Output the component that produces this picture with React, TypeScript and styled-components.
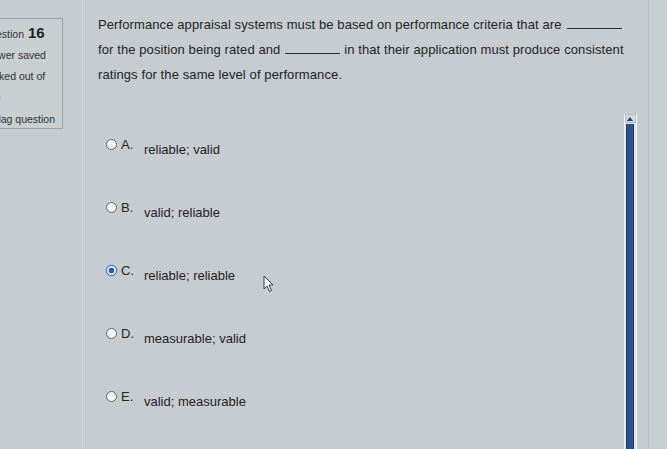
import React from "react";
import styled, { createGlobalStyle } from "styled-components";

const GlobalStyle = createGlobalStyle`
  html, body {
    margin: 0;
    padding: 0;
    background: #c6cccf;
    overflow: hidden;
  }
`;

interface Choice {
  letter: string;
  text: string;
  checked?: boolean;
}

const choices: Choice[] = [
  { letter: "A.", text: "reliable; valid" },
  { letter: "B.", text: "valid; reliable" },
  { letter: "C.", text: "reliable; reliable", checked: true },
  { letter: "D.", text: "measurable; valid" },
  { letter: "E.", text: "valid; measurable" },
];

function App() {
  return (
    <>
      <GlobalStyle />
      <Page>
        <SideColumn>
          <InfoBox>
            <QuestionNo>
              Question <b>16</b>
            </QuestionNo>
            <InfoLine>Answer saved</InfoLine>
            <InfoLine>Marked out of</InfoLine>
            <InfoLine>1.00</InfoLine>
            <FlagLine>Flag question</FlagLine>
          </InfoBox>
        </SideColumn>

        <Main>
          <Content>
            <QuestionText>
              Performance appraisal systems must be based on performance criteria that are
              <Blank />
              <br />
              for the position being rated and<Blank /> in that their application must produce consistent
              <br />
              ratings for the same level of performance.
            </QuestionText>

            <Answers>
              {choices.map((c) => (
                <AnswerRow key={c.letter}>
                  <Radio checked={!!c.checked} />
                  <Letter>{c.letter}</Letter>
                  <AnswerText>{c.text}</AnswerText>
                </AnswerRow>
              ))}
            </Answers>
          </Content>

          <ScrollTrack>
            <ScrollArrow>
              <svg width="6" height="4" viewBox="0 0 6 4">
                <path d="M0 4 L3 0 L6 4 Z" fill="#2d3f5c" />
              </svg>
            </ScrollArrow>
            <ScrollThumb />
          </ScrollTrack>
        </Main>

        <EdgeColumn />

        <Cursor width="12" height="18" viewBox="0 0 12 18">
          <path
            d="M1 1 L1 14 L4 11 L6.5 16.5 L8.5 15.5 L6 10 L10 10 Z"
            fill="#f4f6f7"
            stroke="#3a3f44"
            strokeWidth="1"
            strokeLinejoin="round"
          />
        </Cursor>
      </Page>
    </>
  );
}

const Page = styled.div`
  position: relative;
  display: flex;
  flex-direction: row;
  width: 667px;
  height: 449px;
  background: #c6cccf;
  font-family: "Liberation Sans", Arial, sans-serif;
  color: #1f2224;
  overflow: hidden;
`;

const SideColumn = styled.div`
  width: 83px;
  flex-shrink: 0;
  border-right: 1px solid #d3d8da;
  box-sizing: border-box;
  overflow: hidden;
`;

const InfoBox = styled.div`
  margin-top: 18px;
  margin-left: -28px;
  width: 91px;
  height: 111px;
  box-sizing: border-box;
  border: 1px solid #9ea5a8;
  background: #c9cfd1;
  padding: 6px 0 0 7px;
  font-size: 10.5px;
  color: #2f3335;
`;

const QuestionNo = styled.div`
  line-height: 16px;
  margin-bottom: 7px;
  margin-left: 2px;
  white-space: nowrap;

  b {
    font-size: 15px;
    font-weight: 700;
    color: #1c1f21;
    margin-left: 1px;
  }
`;

const InfoLine = styled.div`
  line-height: 12px;
  margin-bottom: 9px;
  white-space: nowrap;

  &:nth-of-type(3) {
    margin-bottom: 10px;
    margin-left: 1px;
  }
`;

const FlagLine = styled.div`
  line-height: 12px;
  margin-left: 12px;
  white-space: nowrap;
`;

const Main = styled.div`
  flex: 1;
  display: flex;
  flex-direction: row;
`;

const Content = styled.div`
  flex: 1;
  padding: 12px 0 0 15px;
`;

const QuestionText = styled.div`
  font-size: 13px;
  line-height: 25px;
  letter-spacing: 0.1px;
  white-space: nowrap;
  color: #222527;
`;

const Blank = styled.span`
  display: inline-block;
  width: 55px;
  height: 12px;
  margin-left: 5px;
  border-bottom: 1px solid #2a2d2f;
  vertical-align: baseline;
`;

const Answers = styled.div`
  display: flex;
  flex-direction: column;
  margin-top: 50px;
`;

const AnswerRow = styled.div`
  display: flex;
  flex-direction: row;
  align-items: flex-start;
  height: 63px;
  padding-left: 8px;
`;

const Radio = styled.span<{ checked: boolean }>`
  width: 11px;
  height: 11px;
  margin-top: 2px;
  border-radius: 50%;
  box-sizing: border-box;
  border: 1.5px solid ${(p) => (p.checked ? "#2f5fa8" : "#5f6568")};
  background: ${(p) =>
    p.checked
      ? "radial-gradient(circle, #2c5cab 0 2.6px, #f2f5f8 3.2px)"
      : "#f3f5f6"};
  box-shadow: ${(p) => (p.checked ? "0 0 0 1px #a9c2e4" : "none")};
`;

const Letter = styled.span`
  font-size: 13px;
  line-height: 16px;
  margin-left: 4px;
  width: 23px;
  color: #232628;
`;

const AnswerText = styled.span`
  font-size: 13px;
  line-height: 16px;
  padding-top: 5px;
  color: #1f2224;
`;

const ScrollTrack = styled.div`
  width: 11px;
  margin: 114px 11px 0 0;
  display: flex;
  flex-direction: column;
  align-items: center;
  background: #dfe7ec;
  border-left: 1px solid #eef3f6;
  border-right: 1px solid #eef3f6;
`;

const ScrollArrow = styled.div`
  width: 11px;
  height: 9px;
  display: flex;
  align-items: center;
  justify-content: center;
  background: #d3dadf;
  border: 1px solid #b7c0c6;
  box-sizing: border-box;
`;

const ScrollThumb = styled.div`
  flex: 1;
  width: 8px;
  margin-top: 1px;
  background: #2c5288;
  border-left: 1px solid #1f3d68;
  border-right: 1px solid #1f3d68;
  box-sizing: border-box;
`;

const EdgeColumn = styled.div`
  width: 22px;
  flex-shrink: 0;
  border-left: 1px solid #b9c0c3;
  background: #c9cfd1;
`;

const Cursor = styled.svg`
  position: absolute;
  left: 263px;
  top: 275px;
`;

export default App;
